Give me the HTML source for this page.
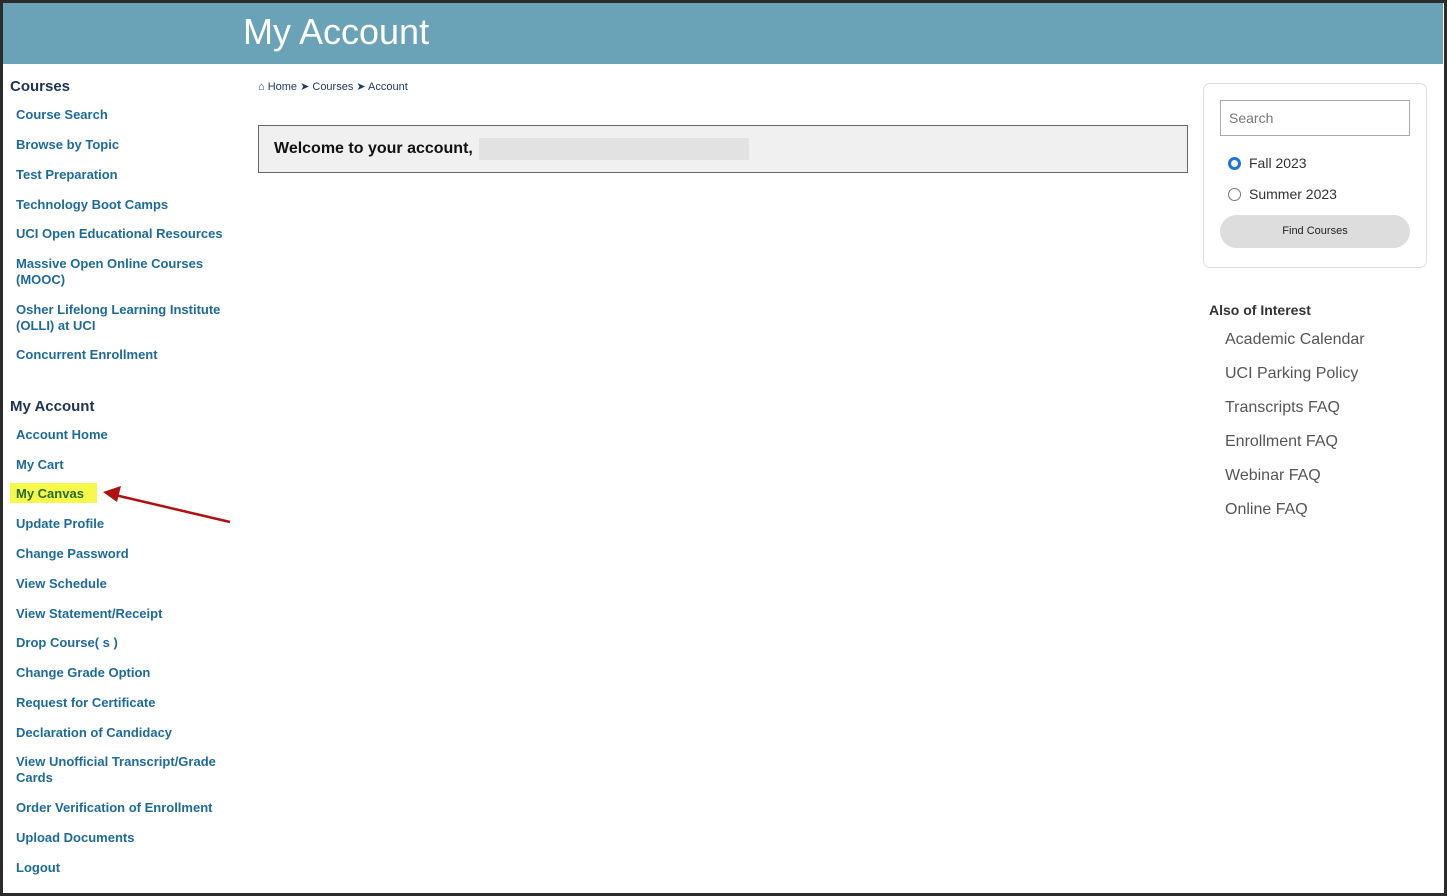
<!DOCTYPE html>
<html><head><meta charset="utf-8"><style>
body{margin:0;width:1447px;height:896px;position:relative;font-family:"Liberation Sans",Arial,sans-serif;background:#fff;overflow:hidden}
.frame{position:absolute;left:0;top:0;width:1441px;height:890px;border:3px solid #2b2b2b;border-right-width:4px}
.hdr{position:absolute;left:3px;top:3px;width:1440px;height:61px;background:#6aa3b8}
.hdr h1{position:absolute;left:240px;top:8px;margin:0;font-weight:normal;font-size:36px;color:#fff}
.a{position:absolute;left:16px;font-size:13px;font-weight:bold;color:#1d6a9c;line-height:16px}
.h{position:absolute;left:10px;font-size:15px;font-weight:bold;color:#1e3456}
.crumb{position:absolute;left:258px;top:80px;font-size:11px;color:#1e3a64}
.wel{position:absolute;left:258px;top:125px;width:928px;height:46px;border:1px solid #666;background:#f0f0f0}
.wel span{position:absolute;left:15px;top:14px;font-size:16px;font-weight:bold;color:#111}
.blur{position:absolute;left:220px;top:12px;width:270px;height:22px;background:#e2e2e2}
.box{position:absolute;left:1203px;top:83px;width:222px;height:183px;border:1px solid #ddd;border-radius:7px}
.search{position:absolute;left:16px;top:16px;width:190px;height:36px;border:1px solid #aaa;font-size:14px;color:#777;box-sizing:border-box;padding:9px 8px}
.rad{position:absolute;left:24px;font-size:14px;color:#333}
.rad i{display:inline-block;width:13px;height:13px;border:1px solid #777;border-radius:50%;vertical-align:-2px;margin-right:8px;box-sizing:border-box}
.btn{position:absolute;left:16px;top:131px;width:190px;height:33px;border-radius:17px;background:#ddd;font-size:11px;text-align:center;line-height:33px;color:#222}
.ai{position:absolute;left:1209px;top:302px;font-size:14px;font-weight:bold;color:#333}
.l{position:absolute;left:1225px;font-size:16px;color:#555}
</style></head><body>
<div class="hdr"><h1>My Account</h1></div>
<div class="h" style="top:78px">Courses</div>
<div class="a" style="top:107px">Course Search</div>
<div class="a" style="top:137px">Browse by Topic</div>
<div class="a" style="top:167px">Test Preparation</div>
<div class="a" style="top:197px">Technology Boot Camps</div>
<div class="a" style="top:226px">UCI Open Educational Resources</div>
<div class="a" style="top:256px">Massive Open Online Courses<br>(MOOC)</div>
<div class="a" style="top:302px">Osher Lifelong Learning Institute<br>(OLLI) at UCI</div>
<div class="a" style="top:347px">Concurrent Enrollment</div>
<div class="h" style="top:398px">My Account</div>
<div class="a" style="top:427px">Account Home</div>
<div class="a" style="top:457px">My Cart</div>
<div style="position:absolute;left:10px;top:483px;width:87px;height:20px;background:#f6f94a"></div>
<div class="a" style="top:486px;color:#2a6a2a">My Canvas</div>
<svg style="position:absolute;left:95px;top:480px" width="145" height="50"><line x1="135" y1="42" x2="20" y2="15" stroke="#b01010" stroke-width="2.5"/><polygon points="8,12 26,6 22,22" fill="#b01010"/></svg>
<div class="a" style="top:516px">Update Profile</div>
<div class="a" style="top:546px">Change Password</div>
<div class="a" style="top:576px">View Schedule</div>
<div class="a" style="top:606px">View Statement/Receipt</div>
<div class="a" style="top:635px">Drop Course( s )</div>
<div class="a" style="top:665px">Change Grade Option</div>
<div class="a" style="top:695px">Request for Certificate</div>
<div class="a" style="top:725px">Declaration of Candidacy</div>
<div class="a" style="top:754px">View Unofficial Transcript/Grade<br>Cards</div>
<div class="a" style="top:800px">Order Verification of Enrollment</div>
<div class="a" style="top:830px">Upload Documents</div>
<div class="a" style="top:860px">Logout</div>
<div class="crumb">&#8962; Home &#10148; Courses &#10148; Account</div>
<div class="wel"><span>Welcome to your account,</span><div class="blur"></div></div>
<div class="box">
<div class="search">Search</div>
<div class="rad" style="top:71px"><i style="border:3px solid #1a73e8;background:#fff;box-shadow:0 0 0 0 #fff"></i>Fall 2023</div>
<div class="rad" style="top:102px"><i></i>Summer 2023</div>
<div class="btn">Find Courses</div>
</div>
<div class="ai">Also of Interest</div>
<div class="l" style="top:331px">Academic Calendar</div>
<div class="l" style="top:365px">UCI Parking Policy</div>
<div class="l" style="top:399px">Transcripts FAQ</div>
<div class="l" style="top:433px">Enrollment FAQ</div>
<div class="l" style="top:467px">Webinar FAQ</div>
<div class="l" style="top:501px">Online FAQ</div>
<div class="frame"></div>
</body></html>
